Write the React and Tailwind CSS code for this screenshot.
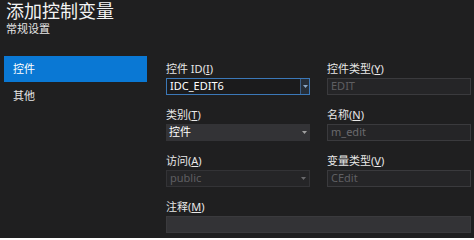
import React from "react";

const font = { fontFamily: '"Noto Sans", "Noto Sans CJK SC", sans-serif' };

function Label({ children, hot, rest }) {
  return (
    <div className="text-[11px] leading-[14px] text-[#e8e8e8] h-[14px] mb-[2px]">
      {children}(<span className="underline">{hot}</span>){rest}
    </div>
  );
}

function Arrow({ color = "#9a9a9a" }) {
  return (
    <svg width="5" height="3" viewBox="0 0 5 3" className="shrink-0">
      <path d="M0 0 H5 L2.5 3 Z" fill={color} />
    </svg>
  );
}

export default function App() {
  return (
    <div style={font} className="w-[474px] h-[238px] bg-[#1f1f20] text-white overflow-hidden flex flex-col">
      <div className="pl-[6px] pt-[2px]">
        <div className="text-[18px] leading-[18px] h-[18px] text-[#f4f4f4]">添加控制变量</div>
        <div className="text-[11px] leading-[11px] h-[11px] mt-[3px] text-[#e6e6e6]">常规设置</div>
      </div>
      <div className="flex flex-1 mt-[22px]">
        <div className="w-[166px] pl-[4px] pr-[19px]">
          <div className="h-[26px] bg-[#0a78d4] flex items-center pl-[9px] text-[11px] text-white">控件</div>
          <div className="h-[26px] flex items-center pl-[9px] text-[11px] text-[#e6e6e6] mt-[1px]">其他</div>
        </div>
        <div className="flex-1 pr-[3px] pt-[6px] grid grid-cols-2 gap-x-[17px] gap-y-[13px] content-start">
          <div>
            <Label hot="I">控件 ID</Label>
            <div className="h-[17px] border border-[#3b78b8] bg-[#1b1b1c] flex items-stretch">
              <div className="flex-1 flex items-center pl-[3px] text-[11px] text-white">IDC_EDIT6</div>
              <div className="w-[9px] border-l border-[#3b5f88] bg-[#262e38] flex items-center justify-center">
                <Arrow color="#8aa8c8" />
              </div>
            </div>
          </div>
          <div>
            <Label hot="Y">控件类型</Label>
            <div className="h-[17px] border border-[#3a3a3d] bg-[#252527] flex items-center pl-[3px] text-[11px] text-[#5f5f62]">EDIT</div>
          </div>
          <div>
            <Label hot="T">类别</Label>
            <div className="h-[17px] bg-[#333336] flex items-center justify-between pl-[3px] pr-[3px] text-[11px] text-white">
              <span>控件</span>
              <Arrow color="#a0a0a0" />
            </div>
          </div>
          <div>
            <Label hot="N">名称</Label>
            <div className="h-[17px] border border-[#3a3a3d] bg-[#252527] flex items-center pl-[3px] text-[11px] text-[#6a6a6d]">m_edit</div>
          </div>
          <div>
            <Label hot="A">访问</Label>
            <div className="h-[17px] border border-[#333336] bg-[#252527] flex items-center justify-between pl-[3px] pr-[3px] text-[11px] text-[#5f5f62]">
              <span>public</span>
              <Arrow color="#6a6a6d" />
            </div>
          </div>
          <div>
            <Label hot="V">变量类型</Label>
            <div className="h-[17px] border border-[#3a3a3d] bg-[#252527] flex items-center pl-[3px] text-[11px] text-[#5f5f62]">CEdit</div>
          </div>
          <div className="col-span-2">
            <Label hot="M">注释</Label>
            <div className="h-[17px] border border-[#3a3a3d] bg-[#333336]"></div>
          </div>
        </div>
      </div>
    </div>
  );
}
